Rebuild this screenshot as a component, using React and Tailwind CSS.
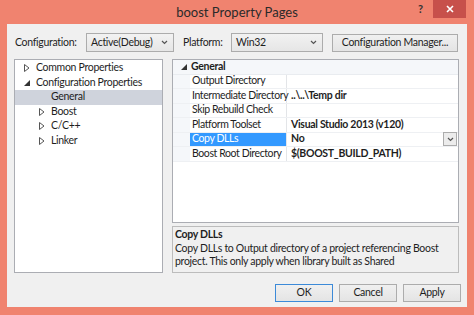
import React from 'react'

const font = { fontFamily: 'Lato, "Noto Sans", sans-serif' }

function Chevron() {
  return (
    <svg width="7" height="5" viewBox="0 0 7 5">
      <path d="M1 1 L3.5 3.5 L6 1" fill="none" stroke="#555" strokeWidth="1.2" />
    </svg>
  )
}

function Closed() {
  return (
    <svg width="6" height="8" viewBox="0 0 6 8">
      <path d="M0.5 0.5 L5 4 L0.5 7.5 Z" fill="none" stroke="#555" strokeWidth="1" />
    </svg>
  )
}

function Open() {
  return (
    <svg width="6" height="6" viewBox="0 0 6 6">
      <path d="M6 0 L6 6 L0 6 Z" fill="#333" />
    </svg>
  )
}

function Combo({ value, width }) {
  return (
    <div className={`${width} h-[19px] border border-[#acacac] bg-gradient-to-b from-[#f2f2f2] to-[#e6e6e6] flex items-center pl-[4px] pr-[5px] justify-between`}>
      <span>{value}</span>
      <Chevron />
    </div>
  )
}

function Btn({ children, primary, width = 'w-[58px]' }) {
  return (
    <div className={`${width} h-[18px] flex items-center justify-center border ${primary ? 'border-[#3c8ad8]' : 'border-[#acacac]'} bg-gradient-to-b from-[#f0f0f0] to-[#e4e4e4]`}>
      {children}
    </div>
  )
}

const tree = [
  { label: 'Common Properties', icon: 'closed', indent: 0 },
  { label: 'Configuration Properties', icon: 'open', indent: 0 },
  { label: 'General', icon: null, indent: 1, selected: true },
  { label: 'Boost', icon: 'closed', indent: 1 },
  { label: 'C/C++', icon: 'closed', indent: 1 },
  { label: 'Linker', icon: 'closed', indent: 1 },
]

const props = [
  { name: 'Output Directory', value: '' },
  { name: 'Intermediate Directory', value: '..\\..\\Temp dir' },
  { name: 'Skip Rebuild Check', value: '' },
  { name: 'Platform Toolset', value: 'Visual Studio 2013 (v120)' },
  { name: 'Copy DLLs', value: 'No', selected: true },
  { name: 'Boost Root Directory', value: '$(BOOST_BUILD_PATH)' },
]

export default function App() {
  return (
    <div className="w-[474px] h-[315px] bg-[#f0836f] flex flex-col text-[10.5px] tracking-[-0.3px] text-[#1e1e1e] overflow-hidden" style={font}>
      <div className="h-[24px] flex items-start relative tracking-normal">
        <div className="flex-1 text-center text-[13px] leading-[24px] text-[#2a2a2a]">boost Property Pages</div>
        <div className="absolute left-[418px] top-[1px] text-[11px] font-bold text-[#333] leading-[16px]">?</div>
        <div className="absolute left-[433px] top-0 w-[33px] h-[18px] bg-[#c7504b] flex items-center justify-center">
          <svg width="8" height="8" viewBox="0 0 8 8">
            <path d="M1 1 L7 7 M7 1 L1 7" stroke="#fff" strokeWidth="1.6" />
          </svg>
        </div>
      </div>

      <div className="mx-[7px] mb-[8px] flex-1 bg-[#f0f0f0] flex flex-col pt-[9px] pl-[7px] pr-[8px]">
        <div className="flex items-center h-[19px]">
          <span className="pl-[1px] w-[72px]">Configuration:</span>
          <Combo value="Active(Debug)" width="w-[88px]" />
          <span className="ml-[9px] w-[48px]">Platform:</span>
          <Combo value="Win32" width="w-[92px]" />
          <Btn width="w-[126px] ml-[9px]">Configuration Manager...</Btn>
        </div>

        <div className="flex mt-[7px] h-[214px]">
          <div className="w-[149px] border border-[#abadb3] bg-white pt-[1px]">
            {tree.map((t) => (
              <div
                key={t.label}
                className={`h-[14.5px] flex items-center ${t.selected ? 'bg-[#cfd3dc]' : ''}`}
              >
                <div className={`${t.indent ? 'w-[36px]' : 'w-[21px]'} flex justify-end pr-[6px]`}>
                  {t.icon === 'closed' && <Closed />}
                  {t.icon === 'open' && <Open />}
                </div>
                <span>{t.label}</span>
              </div>
            ))}
          </div>

          <div className="ml-[9px] flex-1 flex flex-col">
            <div className="h-[165px] border border-[#abadb3] bg-white">
              <div className="h-[14.5px] flex items-center bg-[#f5f7fa] border-b border-[#e9ecf0]">
                <div className="w-[18px] flex justify-end pr-[4px]"><Open /></div>
                <span className="font-bold">General</span>
              </div>
              {props.map((p) => (
                <div key={p.name} className="h-[14.5px] flex border-b border-[#eef0f3]">
                  <div className="w-[17px] bg-[#f5f7fa]" />
                  <div className={`w-[97px] pl-[2px] flex items-center whitespace-nowrap tracking-[-0.4px] border-r border-[#e3e5e8] ${p.selected ? 'bg-[#3399ff] text-white' : ''}`}>
                    {p.name}
                  </div>
                  <div className="flex-1 flex items-center justify-between pl-[4px] pr-[1px] font-bold">
                    <span>{p.value}</span>
                    {p.selected && (
                      <div className="w-[14px] h-[14px] border border-[#acacac] bg-[#ececec] flex items-center justify-center">
                        <Chevron />
                      </div>
                    )}
                  </div>
                </div>
              ))}
            </div>
            <div className="mt-[3px] h-[47px] border border-[#bcbcbc] bg-[#f0f0f0] px-[2px] pt-[1px] leading-[13.5px] whitespace-nowrap">
              <div className="font-bold">Copy DLLs</div>
              <div>Copy DLLs to Output directory of a project referencing Boost</div>
              <div>project. This only apply when library built as Shared</div>
            </div>
          </div>
        </div>

        <div className="flex justify-end gap-[6px] mt-[11px] -mr-[2px]">
          <Btn primary>OK</Btn>
          <Btn>Cancel</Btn>
          <Btn>Apply</Btn>
        </div>
      </div>
    </div>
  )
}
